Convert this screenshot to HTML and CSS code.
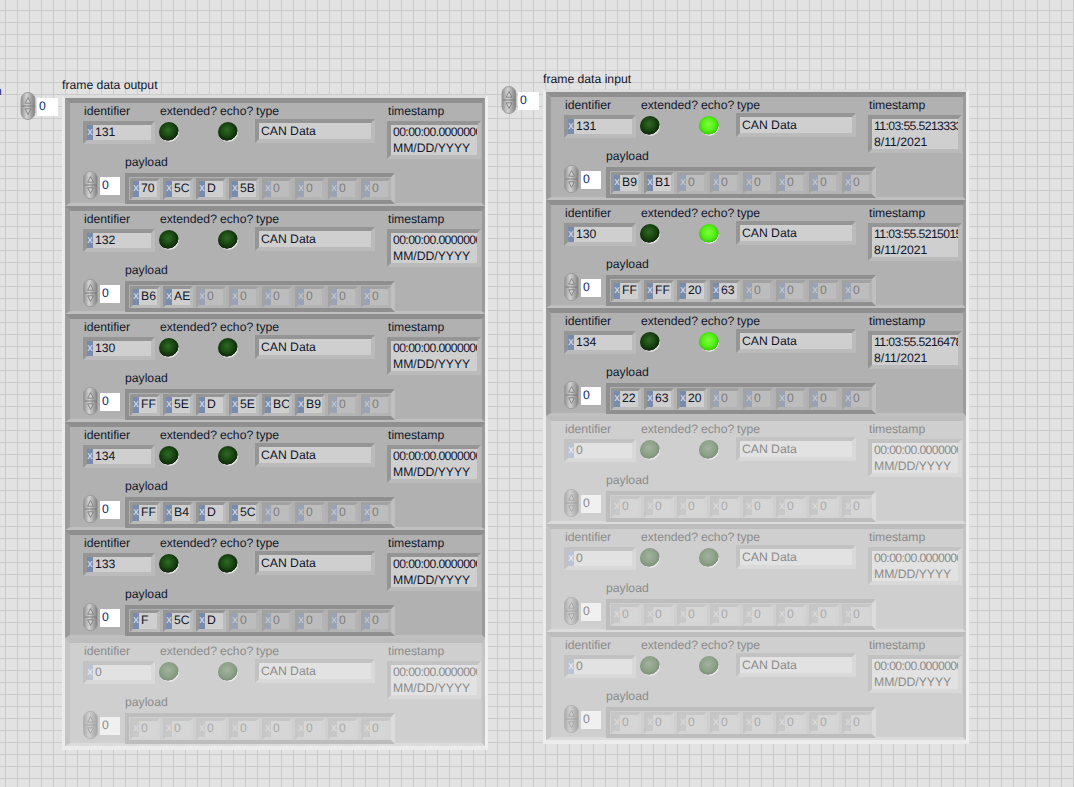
FILE: index.html
```html
<!DOCTYPE html>
<html lang="en">
<head>
<meta charset="utf-8">
<title>frame data</title>
<link rel="stylesheet" href="styles.css">
</head>
<body>
<svg class="defs" width="0" height="0" aria-hidden="true">
  <defs>
    <linearGradient id="pill" x1="0" y1="0" x2="1" y2="0">
      <stop offset="0" stop-color="#8f8f8f"/><stop offset="0.4" stop-color="#d2d2d2"/><stop offset="1" stop-color="#7e7e7e"/>
    </linearGradient>
    <symbol id="spin" viewBox="0 0 16 30">
      <rect x="0.5" y="0.5" width="15" height="29" rx="7.5" fill="url(#pill)" stroke="#9a9a9a"/>
      <path d="M1.5 15H14.5" stroke="#777"/>
      <path d="M8 6L11 12H5Z" fill="#cfcfcf" stroke="#707070" stroke-width="0.8"/>
      <path d="M8 24L11 18H5Z" fill="#cfcfcf" stroke="#707070" stroke-width="0.8"/>
    </symbol>
  </defs>
</svg>
<span class="stray">n</span>

<section class="panel panel-out">
  <div class="index"><svg class="spin"><use href="#spin"/></svg><span class="box">0</span></div>
  <div class="arr">
    <div class="arr-label">frame data output</div>
    <div class="frame">
      <div class="row">
        <span class="lb">identifier</span><span class="lb">extended?</span><span class="lb">echo?</span><span class="lb">type</span><span class="lb">timestamp</span>
        <span class="fld id"><i class="rdx">x</i>131</span><span class="led"></span><span class="led"></span><span class="fld ty">CAN Data</span><span class="fld ts"><b>00:00:00.0000000</b><b>MM/DD/YYYY</b></span>
        <span class="lb pl">payload</span>
        <div class="pay"><svg class="spin sm"><use href="#spin"/></svg><span class="box">0</span><div class="cells"><span class="c"><i class="rdx">x</i>70</span><span class="c"><i class="rdx">x</i>5C</span><span class="c"><i class="rdx">x</i>D</span><span class="c"><i class="rdx">x</i>5B</span><span class="c n"><i class="rdx">x</i>0</span><span class="c n"><i class="rdx">x</i>0</span><span class="c n"><i class="rdx">x</i>0</span><span class="c n"><i class="rdx">x</i>0</span></div></div>
      </div>
      <div class="row">
        <span class="lb">identifier</span><span class="lb">extended?</span><span class="lb">echo?</span><span class="lb">type</span><span class="lb">timestamp</span>
        <span class="fld id"><i class="rdx">x</i>132</span><span class="led"></span><span class="led"></span><span class="fld ty">CAN Data</span><span class="fld ts"><b>00:00:00.0000000</b><b>MM/DD/YYYY</b></span>
        <span class="lb pl">payload</span>
        <div class="pay"><svg class="spin sm"><use href="#spin"/></svg><span class="box">0</span><div class="cells"><span class="c"><i class="rdx">x</i>B6</span><span class="c"><i class="rdx">x</i>AE</span><span class="c n"><i class="rdx">x</i>0</span><span class="c n"><i class="rdx">x</i>0</span><span class="c n"><i class="rdx">x</i>0</span><span class="c n"><i class="rdx">x</i>0</span><span class="c n"><i class="rdx">x</i>0</span><span class="c n"><i class="rdx">x</i>0</span></div></div>
      </div>
      <div class="row">
        <span class="lb">identifier</span><span class="lb">extended?</span><span class="lb">echo?</span><span class="lb">type</span><span class="lb">timestamp</span>
        <span class="fld id"><i class="rdx">x</i>130</span><span class="led"></span><span class="led"></span><span class="fld ty">CAN Data</span><span class="fld ts"><b>00:00:00.0000000</b><b>MM/DD/YYYY</b></span>
        <span class="lb pl">payload</span>
        <div class="pay"><svg class="spin sm"><use href="#spin"/></svg><span class="box">0</span><div class="cells"><span class="c"><i class="rdx">x</i>FF</span><span class="c"><i class="rdx">x</i>5E</span><span class="c"><i class="rdx">x</i>D</span><span class="c"><i class="rdx">x</i>5E</span><span class="c"><i class="rdx">x</i>BC</span><span class="c"><i class="rdx">x</i>B9</span><span class="c n"><i class="rdx">x</i>0</span><span class="c n"><i class="rdx">x</i>0</span></div></div>
      </div>
      <div class="row">
        <span class="lb">identifier</span><span class="lb">extended?</span><span class="lb">echo?</span><span class="lb">type</span><span class="lb">timestamp</span>
        <span class="fld id"><i class="rdx">x</i>134</span><span class="led"></span><span class="led"></span><span class="fld ty">CAN Data</span><span class="fld ts"><b>00:00:00.0000000</b><b>MM/DD/YYYY</b></span>
        <span class="lb pl">payload</span>
        <div class="pay"><svg class="spin sm"><use href="#spin"/></svg><span class="box">0</span><div class="cells"><span class="c"><i class="rdx">x</i>FF</span><span class="c"><i class="rdx">x</i>B4</span><span class="c"><i class="rdx">x</i>D</span><span class="c"><i class="rdx">x</i>5C</span><span class="c n"><i class="rdx">x</i>0</span><span class="c n"><i class="rdx">x</i>0</span><span class="c n"><i class="rdx">x</i>0</span><span class="c n"><i class="rdx">x</i>0</span></div></div>
      </div>
      <div class="row">
        <span class="lb">identifier</span><span class="lb">extended?</span><span class="lb">echo?</span><span class="lb">type</span><span class="lb">timestamp</span>
        <span class="fld id"><i class="rdx">x</i>133</span><span class="led"></span><span class="led"></span><span class="fld ty">CAN Data</span><span class="fld ts"><b>00:00:00.0000000</b><b>MM/DD/YYYY</b></span>
        <span class="lb pl">payload</span>
        <div class="pay"><svg class="spin sm"><use href="#spin"/></svg><span class="box">0</span><div class="cells"><span class="c"><i class="rdx">x</i>F</span><span class="c"><i class="rdx">x</i>5C</span><span class="c"><i class="rdx">x</i>D</span><span class="c n"><i class="rdx">x</i>0</span><span class="c n"><i class="rdx">x</i>0</span><span class="c n"><i class="rdx">x</i>0</span><span class="c n"><i class="rdx">x</i>0</span><span class="c n"><i class="rdx">x</i>0</span></div></div>
      </div>
      <div class="row off">
        <span class="lb">identifier</span><span class="lb">extended?</span><span class="lb">echo?</span><span class="lb">type</span><span class="lb">timestamp</span>
        <span class="fld id"><i class="rdx">x</i>0</span><span class="led"></span><span class="led"></span><span class="fld ty">CAN Data</span><span class="fld ts"><b>00:00:00.0000000</b><b>MM/DD/YYYY</b></span>
        <span class="lb pl">payload</span>
        <div class="pay"><svg class="spin sm"><use href="#spin"/></svg><span class="box">0</span><div class="cells"><span class="c"><i class="rdx">x</i>0</span><span class="c"><i class="rdx">x</i>0</span><span class="c"><i class="rdx">x</i>0</span><span class="c"><i class="rdx">x</i>0</span><span class="c"><i class="rdx">x</i>0</span><span class="c"><i class="rdx">x</i>0</span><span class="c"><i class="rdx">x</i>0</span><span class="c"><i class="rdx">x</i>0</span></div></div>
      </div>
    </div>
  </div>
</section>

<section class="panel panel-in">
  <div class="index"><svg class="spin"><use href="#spin"/></svg><span class="box">0</span></div>
  <div class="arr">
    <div class="arr-label">frame data input</div>
    <div class="frame">
      <div class="row">
        <span class="lb">identifier</span><span class="lb">extended?</span><span class="lb">echo?</span><span class="lb">type</span><span class="lb">timestamp</span>
        <span class="fld id"><i class="rdx">x</i>131</span><span class="led"></span><span class="led on"></span><span class="fld ty">CAN Data</span><span class="fld ts"><b>11:03:55.5213333</b><b>8/11/2021</b></span>
        <span class="lb pl">payload</span>
        <div class="pay"><svg class="spin sm"><use href="#spin"/></svg><span class="box">0</span><div class="cells"><span class="c"><i class="rdx">x</i>B9</span><span class="c"><i class="rdx">x</i>B1</span><span class="c n"><i class="rdx">x</i>0</span><span class="c n"><i class="rdx">x</i>0</span><span class="c n"><i class="rdx">x</i>0</span><span class="c n"><i class="rdx">x</i>0</span><span class="c n"><i class="rdx">x</i>0</span><span class="c n"><i class="rdx">x</i>0</span></div></div>
      </div>
      <div class="row">
        <span class="lb">identifier</span><span class="lb">extended?</span><span class="lb">echo?</span><span class="lb">type</span><span class="lb">timestamp</span>
        <span class="fld id"><i class="rdx">x</i>130</span><span class="led"></span><span class="led on"></span><span class="fld ty">CAN Data</span><span class="fld ts"><b>11:03:55.5215015</b><b>8/11/2021</b></span>
        <span class="lb pl">payload</span>
        <div class="pay"><svg class="spin sm"><use href="#spin"/></svg><span class="box">0</span><div class="cells"><span class="c"><i class="rdx">x</i>FF</span><span class="c"><i class="rdx">x</i>FF</span><span class="c"><i class="rdx">x</i>20</span><span class="c"><i class="rdx">x</i>63</span><span class="c n"><i class="rdx">x</i>0</span><span class="c n"><i class="rdx">x</i>0</span><span class="c n"><i class="rdx">x</i>0</span><span class="c n"><i class="rdx">x</i>0</span></div></div>
      </div>
      <div class="row">
        <span class="lb">identifier</span><span class="lb">extended?</span><span class="lb">echo?</span><span class="lb">type</span><span class="lb">timestamp</span>
        <span class="fld id"><i class="rdx">x</i>134</span><span class="led"></span><span class="led on"></span><span class="fld ty">CAN Data</span><span class="fld ts"><b>11:03:55.5216478</b><b>8/11/2021</b></span>
        <span class="lb pl">payload</span>
        <div class="pay"><svg class="spin sm"><use href="#spin"/></svg><span class="box">0</span><div class="cells"><span class="c"><i class="rdx">x</i>22</span><span class="c"><i class="rdx">x</i>63</span><span class="c"><i class="rdx">x</i>20</span><span class="c n"><i class="rdx">x</i>0</span><span class="c n"><i class="rdx">x</i>0</span><span class="c n"><i class="rdx">x</i>0</span><span class="c n"><i class="rdx">x</i>0</span><span class="c n"><i class="rdx">x</i>0</span></div></div>
      </div>
      <div class="row off">
        <span class="lb">identifier</span><span class="lb">extended?</span><span class="lb">echo?</span><span class="lb">type</span><span class="lb">timestamp</span>
        <span class="fld id"><i class="rdx">x</i>0</span><span class="led"></span><span class="led"></span><span class="fld ty">CAN Data</span><span class="fld ts"><b>00:00:00.0000000</b><b>MM/DD/YYYY</b></span>
        <span class="lb pl">payload</span>
        <div class="pay"><svg class="spin sm"><use href="#spin"/></svg><span class="box">0</span><div class="cells"><span class="c"><i class="rdx">x</i>0</span><span class="c"><i class="rdx">x</i>0</span><span class="c"><i class="rdx">x</i>0</span><span class="c"><i class="rdx">x</i>0</span><span class="c"><i class="rdx">x</i>0</span><span class="c"><i class="rdx">x</i>0</span><span class="c"><i class="rdx">x</i>0</span><span class="c"><i class="rdx">x</i>0</span></div></div>
      </div>
      <div class="row off">
        <span class="lb">identifier</span><span class="lb">extended?</span><span class="lb">echo?</span><span class="lb">type</span><span class="lb">timestamp</span>
        <span class="fld id"><i class="rdx">x</i>0</span><span class="led"></span><span class="led"></span><span class="fld ty">CAN Data</span><span class="fld ts"><b>00:00:00.0000000</b><b>MM/DD/YYYY</b></span>
        <span class="lb pl">payload</span>
        <div class="pay"><svg class="spin sm"><use href="#spin"/></svg><span class="box">0</span><div class="cells"><span class="c"><i class="rdx">x</i>0</span><span class="c"><i class="rdx">x</i>0</span><span class="c"><i class="rdx">x</i>0</span><span class="c"><i class="rdx">x</i>0</span><span class="c"><i class="rdx">x</i>0</span><span class="c"><i class="rdx">x</i>0</span><span class="c"><i class="rdx">x</i>0</span><span class="c"><i class="rdx">x</i>0</span></div></div>
      </div>
      <div class="row off">
        <span class="lb">identifier</span><span class="lb">extended?</span><span class="lb">echo?</span><span class="lb">type</span><span class="lb">timestamp</span>
        <span class="fld id"><i class="rdx">x</i>0</span><span class="led"></span><span class="led"></span><span class="fld ty">CAN Data</span><span class="fld ts"><b>00:00:00.0000000</b><b>MM/DD/YYYY</b></span>
        <span class="lb pl">payload</span>
        <div class="pay"><svg class="spin sm"><use href="#spin"/></svg><span class="box">0</span><div class="cells"><span class="c"><i class="rdx">x</i>0</span><span class="c"><i class="rdx">x</i>0</span><span class="c"><i class="rdx">x</i>0</span><span class="c"><i class="rdx">x</i>0</span><span class="c"><i class="rdx">x</i>0</span><span class="c"><i class="rdx">x</i>0</span><span class="c"><i class="rdx">x</i>0</span><span class="c"><i class="rdx">x</i>0</span></div></div>
      </div>
    </div>
  </div>
</section>
</body>
</html>
```

FILE: styles.css
```css
html, body {
  margin: 0;
  height: 100%;
}
body {
  position: relative;
  overflow: hidden;
  background-color: #e2e2e2;
  background-image:
    linear-gradient(to right, #cbcbcb 1px, transparent 1px),
    linear-gradient(to bottom, #cbcbcb 1px, transparent 1px);
  background-size: 12px 12px;
  background-position: 5px 10px;
  font-family: "Liberation Sans", Arial, sans-serif;
  font-size: 12.2px;
  text-rendering: geometricPrecision;
  color: #10162c;
}
.defs { position: absolute; }
.stray {
  position: absolute;
  left: -5px;
  top: 84px;
  color: #1a2a70;
}
.panel {
  position: absolute;
  display: flex;
}
.panel-out { left: 20px; top: 78px; }
.panel-in { left: 501px; top: 72px; }

.index {
  display: flex;
  align-items: flex-start;
  gap: 1px;
  width: 42px;
  margin-top: 14px;
}
.spin {
  flex: none;
  width: 16px;
  height: 28px;
}
.spin.sm { height: 30px; margin-top: -2px; width: 15px; }
.box {
  flex: none;
  box-sizing: border-box;
  width: 21px;
  height: 18px;
  margin-top: 6px;
  padding-left: 2px;
  background: #fff;
  color: #0a2a6a;
  line-height: 17px;
}

.arr-label {
  height: 17px;
  line-height: 15px;
}
.frame {
  box-sizing: border-box;
  width: 426px;
  border: 3px solid #ececec;
  border-top-color: #dddddd;
  border-bottom-width: 4px;
  border-right-color: #f0f0f0;
}

.row {
  --bg: #b1b1b1;
  --hi: #bfbfbf;
  --lo: #8f8f8f;
  --side: #9b9b9b;
  --ink: #10162c;
  --fld: #cfcfcf;
  --fhi: #bbbbbb;
  --flo: #959595;
  --rdx: #7a8cad;
  --rx: #dfe4ee;
  box-sizing: border-box;
  height: 108px;
  display: grid;
  grid-template-columns: 72px 64px 36px 120px 106px;
  grid-template-rows: 17px 34px 17px 32px;
  padding: 1px 0 0 13px;
  background: var(--bg);
  color: var(--ink);
  border-style: solid;
  border-width: 5px 3px 3px 5px;
  border-color: var(--lo) var(--side) var(--hi) var(--side);
}
.row.off {
  --bg: #cfcfcf;
  --hi: #dcdcdc;
  --lo: #bdbdbd;
  --side: #c4c4c4;
  --ink: #8b8b8b;
  --fld: #e2e2e2;
  --fhi: #d9d9d9;
  --flo: #c2c2c2;
  --rdx: #bcc4d2;
  --rx: #eef0f4;
}

.lb {
  line-height: 15px;
  white-space: nowrap;
  padding-left: 1px;
}
.lb:nth-child(2) { margin-left: 5px; padding-left: 0; }
.lb:nth-child(5) { margin-left: 12px; }
.pl {
  grid-column: 1 / 5;
  grid-row: 3;
  padding-left: 42px;
}

.fld {
  box-sizing: border-box;
  display: block;
  background: var(--fld);
  border: 4px solid;
  border-color: var(--flo) var(--fhi) var(--fhi) var(--flo);
  white-space: nowrap;
  overflow: hidden;
}
.id {
  grid-column: 1;
  grid-row: 2;
  display: flex;
  width: 72px;
  height: 23px;
  line-height: 15px;
}
.ty {
  grid-column: 4;
  grid-row: 2;
  width: 120px;
  height: 24px;
  margin-top: -2px;
  padding: 1px 0 0 2px;
  line-height: 15px;
}
.ts {
  grid-column: 5;
  grid-row: 2 / 4;
  align-self: start;
  width: 94px;
  height: 38px;
  margin-left: 12px;
  padding-left: 2px;
}
.ts b {
  display: block;
  font-weight: normal;
  line-height: 16px;
  overflow: hidden;
  position: relative;
  top: -1px;
}
.ts b:first-child { letter-spacing: -0.6px; }
.rdx {
  flex: none;
  width: 6px;
  margin-right: 2px;
  background: var(--rdx);
  color: var(--rx);
  font-style: normal;
  font-size: 11px;
  text-align: center;
  overflow: hidden;
}

.led {
  grid-row: 2;
  justify-self: start;
  box-sizing: border-box;
  width: 20px;
  height: 20px;
  margin-top: 1px;
  border-radius: 50%;
  background:
    radial-gradient(circle at 45% 40%, #2f6a25 0, #1c4a14 35%, #0e2a09 64%, transparent 66%),
    linear-gradient(135deg, #8a8a8a 15%, #ededed 85%);
}
.fld.id + .led { margin-left: 4px; grid-column: 2; }
.led + .led { margin-left: -1px; grid-column: 3; }
.led.on {
  background:
    radial-gradient(circle at 48% 42%, #7cff3a 0, #56ef16 40%, #3ccb0c 64%, transparent 66%),
    linear-gradient(135deg, #8a8a8a 15%, #ededed 85%);
}
.off .led {
  background:
    radial-gradient(circle at 45% 40%, #a2b39e 0, #8fa28a 40%, #7f927b 64%, transparent 66%),
    linear-gradient(135deg, #b4b4b4 15%, #efefef 85%);
}

.pay {
  grid-column: 1 / 5;
  grid-row: 4;
  display: flex;
  align-items: flex-start;
  gap: 2px;
}
.pay .box { margin-top: 5px; width: 20px; }
.off .box { background: #f0f0f0; color: #8b8b8b; }
.off .spin { opacity: 0.55; }
.cells {
  box-sizing: border-box;
  display: flex;
  gap: 3px;
  width: 271px;
  height: 31px;
  margin-left: 3px;
  margin-top: 1px;
  padding: 1px 0 0 1px;
  border: 4px solid;
  border-color: var(--lo) var(--hi) var(--lo) var(--lo);
  background: var(--bg);
}
.c {
  box-sizing: border-box;
  display: flex;
  flex: none;
  width: 30px;
  height: 22px;
  border: 3px solid;
  border-color: var(--flo) var(--fhi) var(--fhi) var(--flo);
  background: var(--fld);
  line-height: 15px;
  overflow: hidden;
}
.off .c {
  background: #d6d6d6;
  color: #aaaaaa;
  border-color: #c6c6c6 #d4d4d4 #d4d4d4 #c6c6c6;
}
.off .c .rdx { background: #c8c8c8; color: #dedede; }
.c.n {
  background: #bdbdbd;
  color: #7d7d7d;
  border-color: #a2a2a2 #b4b4b4 #b4b4b4 #a2a2a2;
}
.c.n .rdx { background: #9aa3b5; color: #c9cdd6; }
```
